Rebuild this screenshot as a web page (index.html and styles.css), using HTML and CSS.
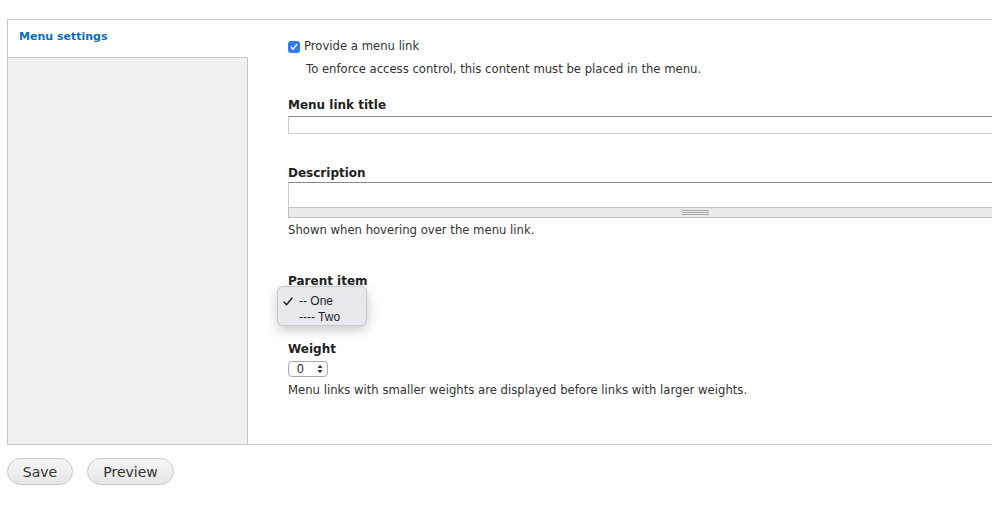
FILE: index.html
```html
<!DOCTYPE html>
<html>
<head>
<meta charset="utf-8">
<link rel="stylesheet" href="styles.css">
</head>
<body>
<div class="page">
  <div class="vtabs">
    <div class="tabs-col">
      <div class="tab-item">Menu settings</div>
      <div class="tab-rest"></div>
    </div>
    <div class="pane">
      <div class="check-row">
        <span class="checkbox"><svg width="12" height="12" viewBox="0 0 12 12"><path d="M3.3 6.3 L5.1 8.1 L8.7 3.7" fill="none" stroke="#fff" stroke-width="1.5" stroke-linecap="round" stroke-linejoin="round"/></svg></span>
        <span class="check-label">Provide a menu link</span>
      </div>
      <div class="check-desc">To enforce access control, this content must be placed in the menu.</div>

      <div class="label l-title">Menu link title</div>
      <div class="text-input"></div>

      <div class="label l-desc">Description</div>
      <div class="textarea">
        <div class="ta-body"></div>
        <div class="grip"><span class="grip-lines"></span></div>
      </div>
      <div class="help h-desc">Shown when hovering over the menu link.</div>

      <div class="label l-parent">Parent item</div>
      <div class="select-wrap">
        <div class="popup">
          <div class="opt"><svg class="tick" width="10" height="9" viewBox="0 0 10 9"><path d="M1 5 L3.6 7.8 L9 1" fill="none" stroke="#222" stroke-width="1.4" stroke-linecap="round" stroke-linejoin="round"/></svg>-- One</div>
          <div class="opt">---- Two</div>
        </div>
      </div>

      <div class="label l-weight">Weight</div>
      <div class="weight-select"><span class="wval">0</span><svg class="arrows" width="6" height="10" viewBox="0 0 6 10"><path d="M0.5 4 L3 0.8 L5.5 4 Z M0.5 6 L3 9.2 L5.5 6 Z" fill="#333"/></svg></div>
      <div class="help h-weight">Menu links with smaller weights are displayed before links with larger weights.</div>
    </div>
  </div>
  <div class="actions">
    <button class="btn btn-save">Save</button>
    <button class="btn btn-preview">Preview</button>
  </div>
</div>
</body>
</html>
```

FILE: styles.css
```css
html, body {
  margin: 0;
  padding: 0;
  background: #fff;
  overflow: hidden;
}
body {
  font-family: "DejaVu Sans", sans-serif;
  color: #333;
  width: 992px;
  height: 513px;
}
.page {
  padding: 19px 0 0 7px;
  width: 1300px;
}
.vtabs {
  display: flex;
  width: 1150px;
  height: 424px;
  border: 1px solid #c9c9c9;
}
.tabs-col {
  width: 240px;
  display: flex;
  flex-direction: column;
}
.tab-item {
  height: 37px;
  box-sizing: border-box;
  padding: 10px 0 0 11px;
  font-size: 11px;
  font-weight: bold;
  color: #0a6fb8;
  background: #fff;
}
.tab-rest {
  flex: 1;
  background: #f0f0f0;
  border-top: 1px solid #c9c9c9;
  border-right: 1px solid #c9c9c9;
}
.pane {
  flex: 1;
  padding: 0 0 0 40px;
  position: relative;
}
.check-row {
  display: flex;
  align-items: center;
  margin-top: 20px;
  height: 13px;
}
.checkbox {
  width: 12px;
  height: 12px;
  border-radius: 3px;
  background: #2f7cf6;
  display: inline-flex;
}
.check-label {
  font-size: 11.65px;
  margin-left: 4px;
  line-height: 13px;
}
.check-desc {
  font-size: 11.65px;
  line-height: 14px;
  margin-top: 9px;
  padding-left: 18px;
}
.label {
  font-size: 12px;
  font-weight: bold;
  line-height: 16px;
  color: #222;
}
.l-title { margin-top: 21px; }
.text-input {
  margin-top: 3px;
  width: 815px;
  height: 18px;
  box-sizing: border-box;
  border: 1px solid #ccc;
  border-top-color: #8a8a8a;
}
.l-desc { margin-top: 31px; }
.textarea {
  margin-top: 1px;
  width: 815px;
}
.ta-body {
  height: 24px;
  border: 1px solid #ccc;
  border-top-color: #8a8a8a;
  border-bottom: none;
}
.grip {
  height: 9px;
  background: #ebebeb;
  border: 1px solid #c4c4c4;
  display: flex;
  justify-content: center;
  align-items: center;
}
.grip-lines {
  width: 27px;
  height: 5px;
  background: linear-gradient(#a9a9a9 0 1px, transparent 1px 2px, #a9a9a9 2px 3px, transparent 3px 4px, #a9a9a9 4px 5px);
}
.help {
  font-size: 11.65px;
  line-height: 14px;
}
.h-desc { margin-top: 5px; }
.l-parent { margin-top: 36px; }
.select-wrap {
  position: relative;
  height: 44px;
}
.popup {
  position: absolute;
  left: -11px;
  top: -3px;
  width: 90px;
  height: 40px;
  box-sizing: border-box;
  border-radius: 6px;
  background: #e7e9ef;
  border: 1px solid #c7c9ce;
  box-shadow: 0 4px 12px rgba(0,0,0,0.22);
  padding: 6px 0 0 0;
  font-family: "Liberation Sans", sans-serif;
  font-size: 12px;
  color: #222;
}
.opt {
  position: relative;
  height: 16px;
  line-height: 16px;
  padding-left: 21px;
}
.tick {
  position: absolute;
  left: 5px;
  top: 4px;
}
.l-weight { margin-top: 8px; }
.weight-select {
  margin-top: 4px;
  width: 40px;
  height: 16px;
  box-sizing: border-box;
  border: 1px solid #a9a9a9;
  border-radius: 4px;
  display: flex;
  align-items: center;
  padding-left: 8px;
  font-family: "Liberation Sans", sans-serif;
  font-size: 12px;
  color: #222;
}
.wval { flex: 1; }
.arrows { margin-right: 4px; }
.h-weight { margin-top: 6px; }
.actions {
  display: flex;
  gap: 14px;
  margin-top: 13px;
}
.btn {
  height: 27px;
  border-radius: 14px;
  border: 1px solid #c8c8c8;
  background: linear-gradient(#f6f6f6, #e6e6e6);
  font-family: "DejaVu Sans", sans-serif;
  font-size: 14px;
  color: #333;
  padding: 0;
}
.btn-save { width: 66px; }
.btn-preview { width: 87px; }
```
